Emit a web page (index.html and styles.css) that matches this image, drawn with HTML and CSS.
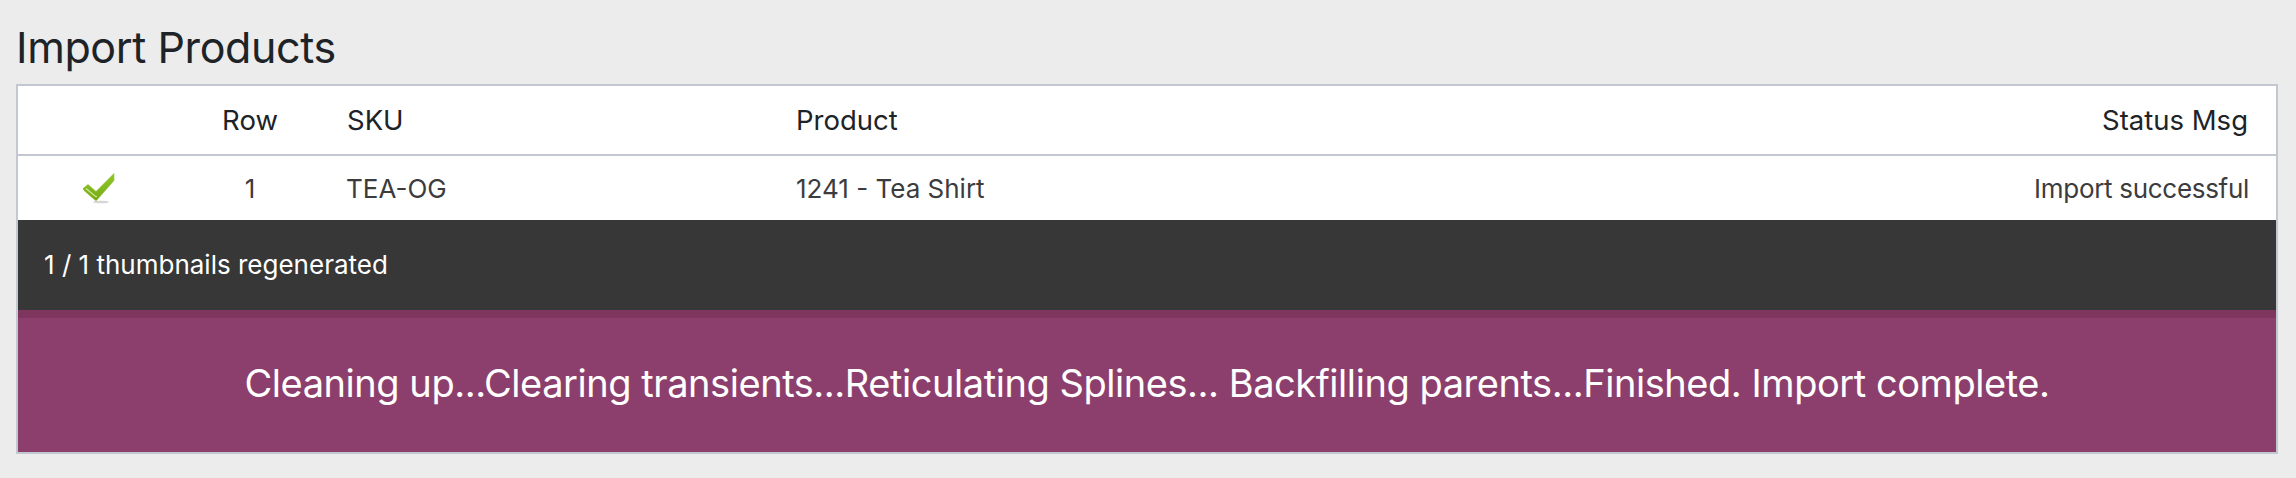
FILE: index.html
```html
<!DOCTYPE html>
<html>
<head>
  <meta charset="utf-8">
  <title>Import Products</title>
  <link rel="stylesheet" href="styles.css">
</head>
<body>
  <div class="wrap">
    <h1>Import Products</h1>
    <div class="panel">
      <table class="results">
        <thead>
          <tr>
            <th class="col-icon"></th>
            <th class="col-row">Row</th>
            <th class="col-sku">SKU</th>
            <th class="col-product">Product</th>
            <th class="col-msg">Status Msg</th>
          </tr>
        </thead>
        <tbody>
          <tr>
            <td class="col-icon">
              <svg class="check" width="36" height="32" viewBox="0 0 36 32">
                <defs>
                  <linearGradient id="tick" x1="0" y1="0" x2="0" y2="1">
                    <stop offset="0" stop-color="#93c82a"/>
                    <stop offset="1" stop-color="#76ab14"/>
                  </linearGradient>
                </defs>
                <ellipse cx="20" cy="30" rx="8" ry="1.3" fill="#bbb" opacity="0.6"/>
                <path d="M2 16.5 L7 12.5 L15 19.5 L33 1.5 L33 8.5 L15.5 28.5 L14.5 28.5 L3 18.5 Z" fill="url(#tick)" stroke="#86b820" stroke-width="0.5" stroke-linejoin="round"/>
                <path d="M5 16.5 L14.5 24.5 L16 24.5" stroke="#d3e89a" stroke-width="1.2" fill="none"/>
              </svg>
            </td>
            <td class="col-row">1</td>
            <td class="col-sku">TEA-OG</td>
            <td class="col-product">1241 - Tea Shirt</td>
            <td class="col-msg">Import successful</td>
          </tr>
        </tbody>
      </table>
      <div class="regen">1 / 1 thumbnails regenerated</div>
      <div class="finish">Cleaning up...Clearing transients...Reticulating Splines... Backfilling parents...Finished. Import complete.</div>
    </div>
  </div>
</body>
</html>
```

FILE: styles.css
```css
* { box-sizing: border-box; }
body {
  margin: 0;
  background: #ececec;
  font-family: Inter, "Liberation Sans", sans-serif;
  color: #3c3c3e;
}
.wrap {
  padding: 0 18px 0 16px;
}
h1 {
  margin: 0;
  padding: 25px 0 0 0;
  height: 84px;
  font-size: 43px;
  line-height: 44px;
  font-weight: 400;
  letter-spacing: -0.4px;
  color: #1d2327;
}
.panel {
  border: 2px solid #c3c8d0;
  background: #fff;
}
.results {
  width: 100%;
  border-collapse: collapse;
  table-layout: fixed;
  font-size: 26px;
}
.results th {
  height: 69px;
  padding: 0;
  font-size: 27.5px;
  font-weight: 400;
  color: #1d2327;
  border-bottom: 2px solid #c3c8d0;
}
.results td {
  height: 65px;
  padding: 0;
}
.col-icon { width: 162px; text-align: center; }
.col-row { width: 140px; text-align: center; }
.results .col-sku { width: 476px; text-align: left; padding-left: 27px; }
.results td.col-sku { padding-left: 26px; }
.col-product { text-align: left; }
.results .col-msg { width: 500px; text-align: right; padding-right: 28px; }
.results td.col-msg { padding-right: 27px; letter-spacing: -0.3px; }
.check { display: block; margin: 0 auto; }
.regen {
  height: 90px;
  background: #373737;
  color: #fff;
  font-size: 26px;
  line-height: 90px;
  padding-left: 26px;
}
.finish {
  height: 142px;
  background: #8c3f6d;
  border-top: 8px solid #7e365f;
  color: #fff;
  font-size: 38px;
  letter-spacing: -0.45px;
  line-height: 131px;
  text-align: center;
}
```
